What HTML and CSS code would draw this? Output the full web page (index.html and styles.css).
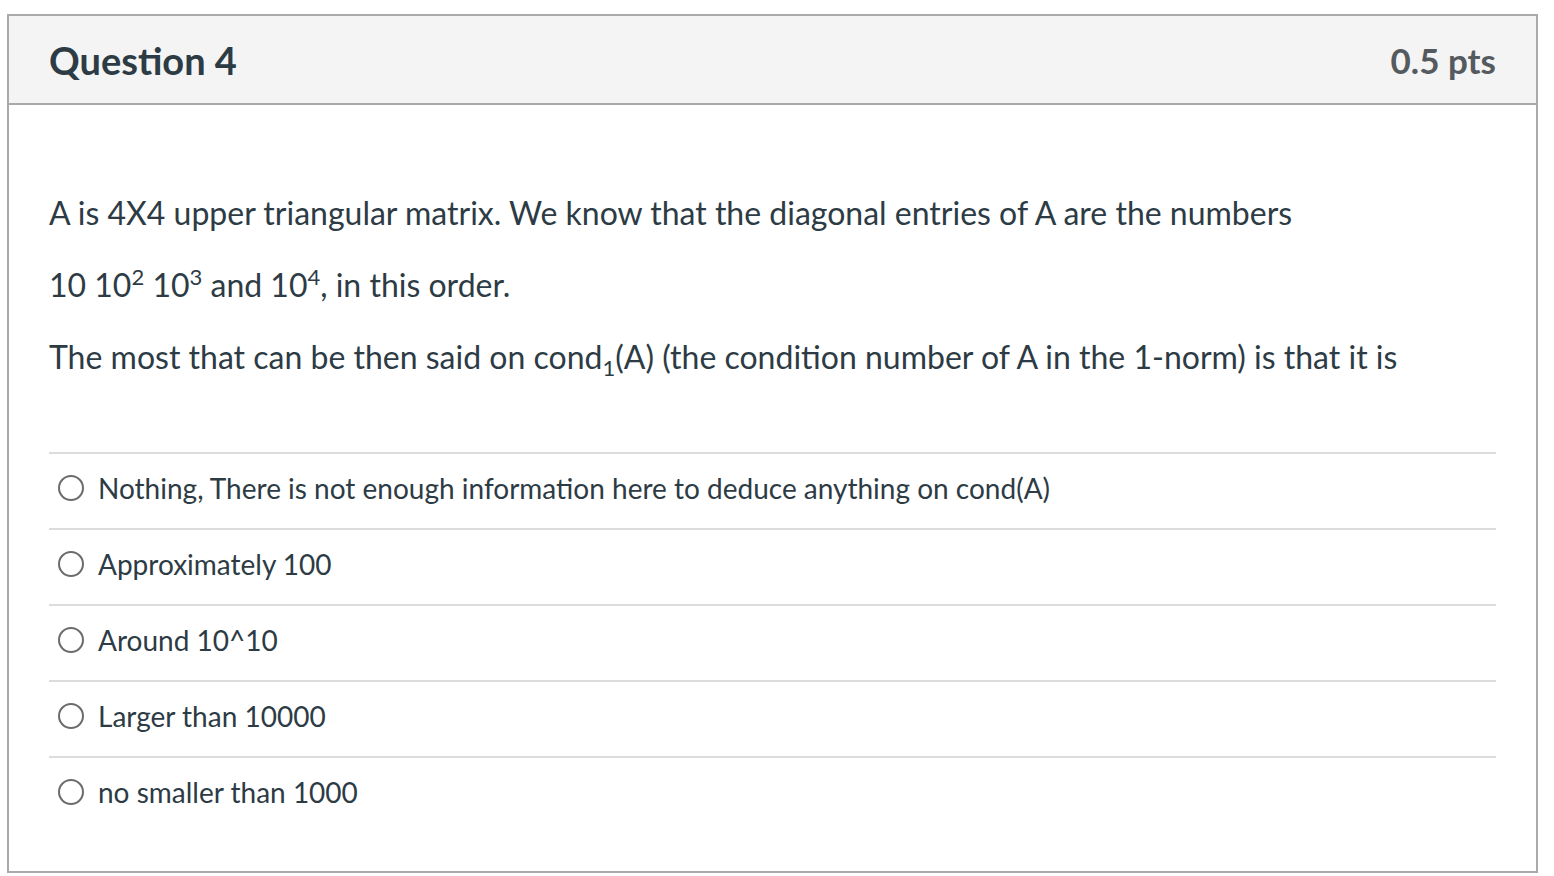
FILE: index.html
```html
<!DOCTYPE html>
<html lang="en">
<head>
<meta charset="utf-8">
<title>Question 4</title>
<link rel="stylesheet" href="styles.css">
</head>
<body>
<div class="card">
  <div class="header">
    <h2 class="title">Question 4</h2>
    <span class="pts">0.5 pts</span>
  </div>
  <div class="body">
    <p class="qtext">A is 4X4 upper triangular matrix. We know that the diagonal entries of A are the numbers</p>
    <p class="qtext">10 10<sup>2</sup> 10<sup>3</sup> and 10<sup>4</sup>, in this order.</p>
    <p class="qtext">The most that can be then said on cond<sub>1</sub>(A) (the condition number of A in the 1-norm) is that it is</p>
    <div class="answers">
      <label class="answer"><span class="radio"></span><span class="atext">Nothing, There is not enough information here to deduce anything on cond(A)</span></label>
      <label class="answer"><span class="radio"></span><span class="atext">Approximately 100</span></label>
      <label class="answer"><span class="radio"></span><span class="atext">Around 10^10</span></label>
      <label class="answer"><span class="radio"></span><span class="atext">Larger than 10000</span></label>
      <label class="answer"><span class="radio"></span><span class="atext">no smaller than 1000</span></label>
    </div>
  </div>
</div>
</body>
</html>
```
FILE: styles.css
```css
html, body {
  margin: 0;
  padding: 0;
  background: #ffffff;
}
body {
  font-family: Lato, "Open Sans", "Liberation Sans", sans-serif;
  color: #2d3b45;
}
.card {
  margin: 14px 0 0 7px;
  width: 1531px;
  box-sizing: border-box;
  border: 2px solid #aaaaaa;
}
.header {
  display: flex;
  justify-content: space-between;
  align-items: center;
  height: 87px;
  padding: 0 40px;
  background: #f4f4f4;
  border-bottom: 2px solid #aaaaaa;
}
.title {
  margin: 0;
  font-size: 38px;
  font-weight: 700;
  color: #2d3b45;
}
.pts {
  font-size: 35px;
  font-weight: 700;
  color: #555a5e;
}
.body {
  padding: 88px 40px 39px 40px;
}
.qtext {
  margin: 0 0 32px 0;
  font-size: 32px;
  line-height: 40px;
}
.qtext sup, .qtext sub {
  font-size: 22px;
  line-height: 0;
}
.answers {
  margin-top: 75px;
}
.answer {
  display: flex;
  align-items: center;
  gap: 14px;
  height: 68px;
  padding-bottom: 6px;
  border-top: 2px solid #dcdcdc;
  padding-left: 9px;
}
.radio {
  width: 22px;
  height: 22px;
  border: 2px solid #6b6b6b;
  border-radius: 50%;
  flex: none;
}
.atext {
  font-size: 28px;
}
```
